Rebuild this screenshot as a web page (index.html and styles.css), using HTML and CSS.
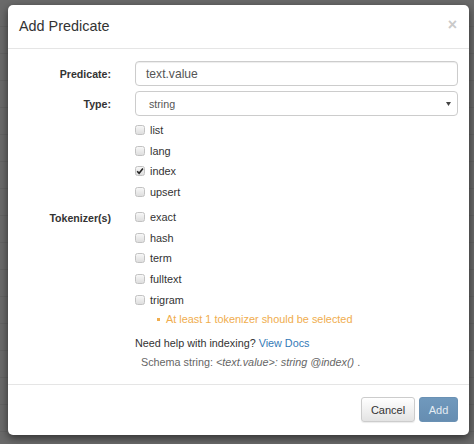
FILE: index.html
```html
<!DOCTYPE html>
<html lang="en">
<head>
<meta charset="utf-8">
<title>Add Predicate</title>
<link rel="stylesheet" href="styles.css">
</head>
<body>
<div class="backdrop">
  <div class="modal">
    <div class="modal-header">
      <h4 class="modal-title">Add Predicate</h4>
      <span class="close">×</span>
    </div>
    <div class="modal-body">
      <div class="form-row row-predicate">
        <label class="field-label">Predicate:</label>
        <div class="field">
          <div class="text-input">text.value</div>
        </div>
      </div>
      <div class="form-row row-type">
        <label class="field-label">Type:</label>
        <div class="field">
          <div class="select-input">
            <span>string</span>
            <svg class="caret" width="5" height="4" viewBox="0 0 5 4"><path d="M0 0 H5 L2.5 4 Z" fill="#444"/></svg>
          </div>
        </div>
      </div>
      <div class="form-row row-options">
        <span class="field-label"></span>
        <div class="field checks">
          <div class="check"><span class="box"></span>list</div>
          <div class="check"><span class="box"></span>lang</div>
          <div class="check"><span class="box checked"><svg width="8" height="8" viewBox="0 0 8 8"><path d="M1.2 4.2 L3.1 6.2 L6.9 1.4" fill="none" stroke="#222" stroke-width="1.6"/></svg></span>index</div>
          <div class="check"><span class="box"></span>upsert</div>
        </div>
      </div>
      <div class="form-row row-tokenizers">
        <span class="field-label tok-label">Tokenizer(s)</span>
        <div class="field checks">
          <div class="check"><span class="box"></span>exact</div>
          <div class="check"><span class="box"></span>hash</div>
          <div class="check"><span class="box"></span>term</div>
          <div class="check"><span class="box"></span>fulltext</div>
          <div class="check"><span class="box"></span>trigram</div>
          <ul class="errors"><li>At least 1 tokenizer should be selected</li></ul>
          <p class="help">Need help with indexing? <a class="link">View Docs</a></p>
          <p class="schema">Schema string: <em>&lt;text.value&gt;: string @index()</em> .</p>
        </div>
      </div>
    </div>
    <div class="modal-footer">
      <button class="btn btn-default">Cancel</button>
      <button class="btn btn-primary" disabled>Add</button>
    </div>
  </div>
</div>
</body>
</html>
```

FILE: styles.css
```css
* { box-sizing: border-box; }
html, body { margin: 0; padding: 0; }
body {
  width: 474px;
  height: 444px;
  overflow: hidden;
  font-family: "Liberation Sans", Arial, sans-serif;
  color: #333;
  background: #6a6a6a;
}
.backdrop {
  height: 444px;
  padding: 5px 5px 0 8px;
  background-color: #6a6a6a;
  background-image: repeating-linear-gradient(to bottom, transparent 0, transparent 26px, rgba(0,0,0,0.07) 26px, rgba(0,0,0,0.07) 27px);
}
.modal {
  width: 461px;
  height: 430px;
  background: #fff;
  border-radius: 5px;
  box-shadow: 0 3px 8px rgba(0,0,0,0.55);
  display: flex;
  flex-direction: column;
}
.modal-header {
  height: 44px;
  border-bottom: 1px solid #e5e5e5;
  display: flex;
  align-items: center;
  justify-content: space-between;
  padding: 0 12px 2px 11px;
}
.modal-title {
  margin: 0;
  font-size: 14.4px;
  font-weight: normal;
  color: #333;
}
.close {
  font-size: 16px;
  font-weight: bold;
  color: #cacaca;
  line-height: 1;
  margin-top: -2px;
}
.modal-body {
  flex: 1;
  padding: 12px 11px 0 0;
}
.form-row {
  display: grid;
  grid-template-columns: 103px 1fr;
  column-gap: 24px;
  align-items: center;
}
.row-type { margin-top: 5px; }
.row-options { margin-top: 3.6px; align-items: start; }
.row-tokenizers { margin-top: 4.3px; align-items: start; }
.field-label {
  text-align: right;
  font-weight: bold;
  font-size: 10.6px;
  color: #333;
}
.tok-label {
  line-height: 20.7px;
  padding-top: 1px;
}
.text-input, .select-input {
  height: 25px;
  border: 1px solid #ccc;
  border-radius: 4px;
  box-shadow: inset 0 1px 1px rgba(0,0,0,0.075);
  color: #555;
  display: flex;
  align-items: center;
}
.text-input {
  padding-left: 10px;
  font-size: 12.1px;
}
.select-input {
  padding: 0 6px 0 13px;
  font-size: 10.7px;
  justify-content: space-between;
  box-shadow: none;
}
.caret { margin-top: 1px; }
.checks { display: flex; flex-direction: column; }
.check {
  height: 20.7px;
  display: flex;
  align-items: center;
  font-size: 10.9px;
  color: #333;
}
.box {
  width: 10px;
  height: 10px;
  border: 1px solid #c2c2c2;
  border-radius: 2.5px;
  background: linear-gradient(#f7f7f7, #dedede);
  margin-right: 5px;
  display: flex;
  align-items: center;
  justify-content: center;
}
.box svg { display: block; }
.errors {
  margin: 0;
  padding: 0 0 0 31px;
  height: 19px;
  line-height: 19px;
  font-size: 10.9px;
  color: #f0ad4e;
  list-style: none;
}
.errors li { position: relative; }
.errors li::before {
  content: "";
  position: absolute;
  left: -9px;
  top: 8px;
  width: 3px;
  height: 3px;
  background: #f0ad4e;
}
.help {
  margin: 6px 0 0;
  line-height: 16px;
  font-size: 10.8px;
  color: #333;
}
.link { color: #337ab7; text-decoration: none; }
.schema {
  margin: 3px 0 0 6px;
  line-height: 16px;
  font-size: 10.8px;
  color: #666;
}
.schema em { font-style: italic; }
.modal-footer {
  border-top: 1px solid #e5e5e5;
  height: 51px;
  padding: 12px 11px 0 0;
  display: flex;
  justify-content: flex-end;
  align-items: flex-start;
  gap: 4px;
}
.btn {
  height: 25px;
  border-radius: 3px;
  font-family: "Liberation Sans", Arial, sans-serif;
  font-size: 11px;
  padding: 0;
}
.btn-default {
  width: 54px;
  border: 1px solid #ccc;
  background: linear-gradient(#fff, #e3e3e3);
  color: #333;
  box-shadow: 0 1px 0 rgba(255,255,255,0.15) inset, 0 1px 1px rgba(0,0,0,0.08);
}
.btn-primary {
  width: 39px;
  border: 1px solid #6a91b4;
  background: linear-gradient(#7099bd, #668db1);
  color: #e4ecf3;
}
```
